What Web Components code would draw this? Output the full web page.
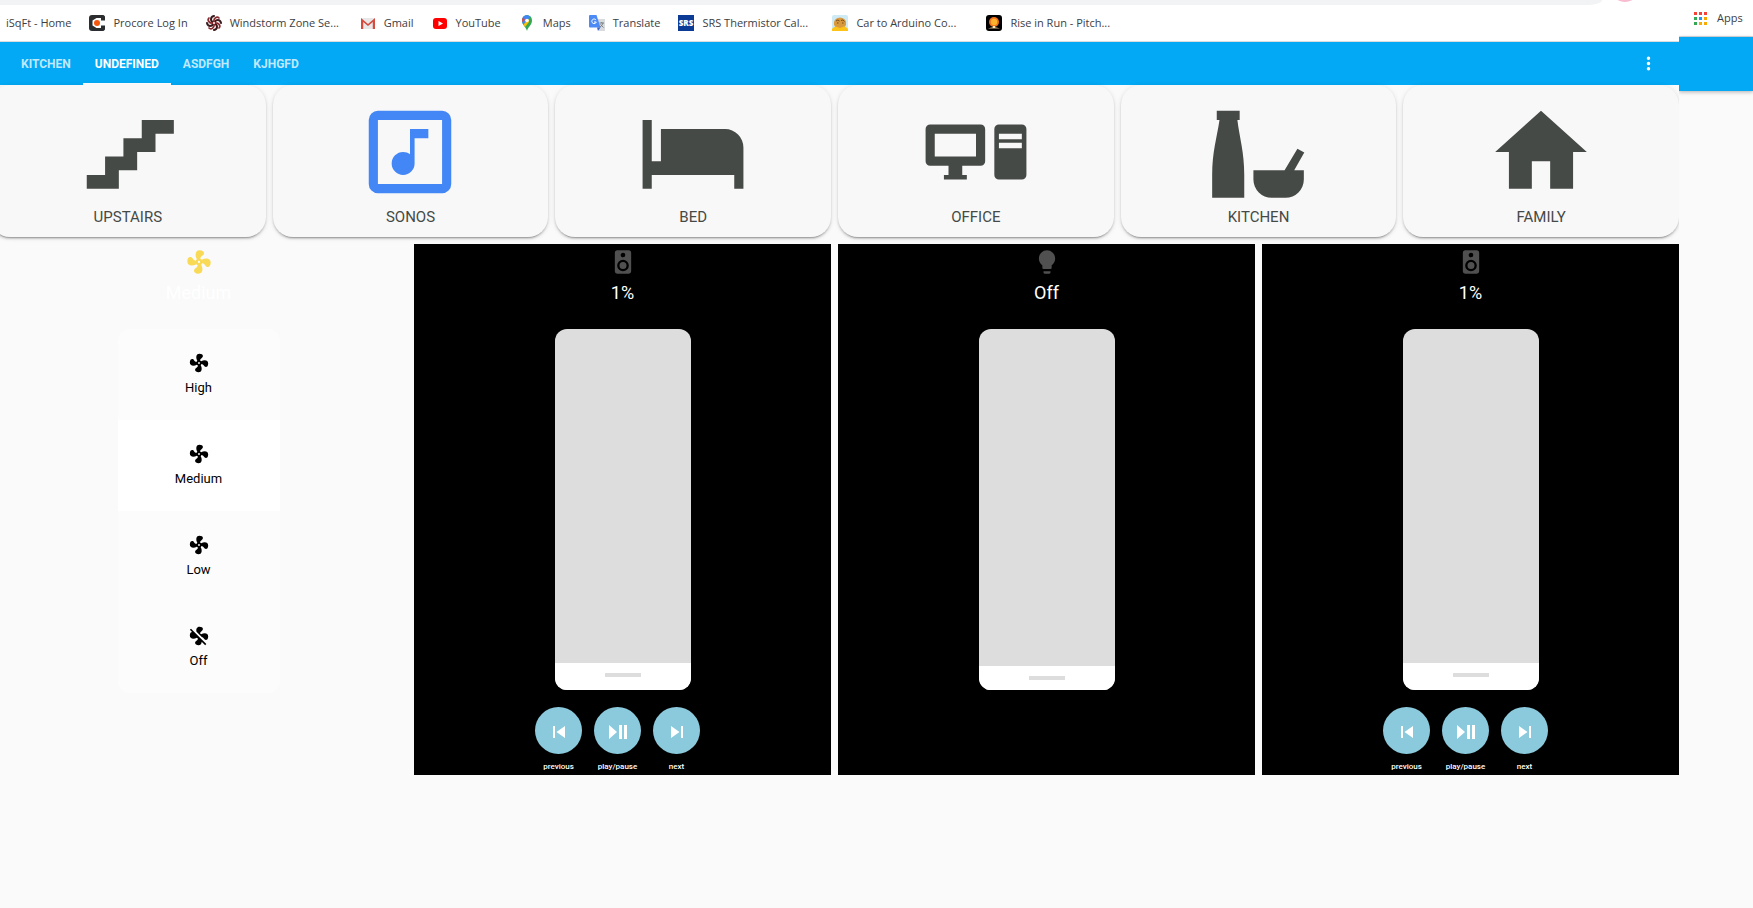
<!DOCTYPE html>
<html lang="en">
<head>
<meta charset="utf-8">
<title>Home</title>
<style>
    body {
        margin: 0;
        min-height: 100vh;
        display: flex;
        background: #fafafa;
        font-family: Roboto, "Liberation Sans", sans-serif;
    }

    main {
        flex: 1;
        min-width: 0;
        overflow: hidden;
    }

    aside {
        width: 74px;
        overflow: hidden;
    }
</style>
</head>
<body>
<main>
    <browser-strip></browser-strip>
    <bookmark-bar>
        <bookmark-link label="iSqFt - Home"></bookmark-link>
        <bookmark-link label="Procore Log In">
            <svg slot="icon" viewBox="0 0 16 16" width="16" height="16"><rect width="16" height="16" rx="3" fill="#2b2d2e"/><path d="M12 3H7.500L3.500 5.500V10.500L7.500 13H12V11H16V5H12Z" fill="#fff"/><path d="M12 0H13A3 3 0 0 1 16 3V5.500H12ZM12 10.500H16V13A3 3 0 0 1 13 16H12Z" fill="#2b2d2e"/><circle cx="8" cy="8" r="3" fill="#f6570f"/></svg>
        </bookmark-link>
        <bookmark-link label="Windstorm Zone Se..." long>
            <svg slot="icon" viewBox="0 0 16 16" width="16" height="16" fill="none" stroke-linecap="round"><g stroke="#3a1a1c" stroke-width="2"><path d="M8 8C4 6 4 2 8 1"/><path d="M8 8C10 4 14 4 15 8"/><path d="M8 8C12 10 12 14 8 15"/><path d="M8 8C6 12 2 12 1 8"/></g><g stroke="#8a2a30" stroke-width="1.700"><path d="M8 8C3 9 1 5 3 3"/><path d="M8 8C7 3 11 1 13 3"/><path d="M8 8C13 7 15 11 13 13"/><path d="M8 8C9 13 5 15 3 13"/></g><circle cx="8" cy="8" r="1" fill="#fff"/></svg>
        </bookmark-link>
        <bookmark-link label="Gmail">
            <svg slot="icon" viewBox="0 0 16 16" width="16" height="16"><path d="M1 3H15V14H1Z" fill="#e8e8e8"/><path d="M1 14V3L8 9L15 3V14H12.800V7L8 11L3.200 7V14Z" fill="#d54b3d"/></svg>
        </bookmark-link>
        <bookmark-link label="YouTube">
            <svg slot="icon" viewBox="0 0 16 16" width="16" height="16"><rect x="1" y="3" width="14" height="11" rx="3" fill="#f00"/><path d="M6.500 6V11L11 8.500Z" fill="#fff"/></svg>
        </bookmark-link>
        <bookmark-link label="Maps">
            <svg slot="icon" viewBox="0 0 16 16" width="16" height="16"><path d="M8 16C7 12 3 10 3 5.500A5 5.500 0 0 1 13 5.500C13 10 9 12 8 16Z" fill="#34a853"/><path d="M3 5.500A5 5.500 0 0 1 8 0L11.500 1.600L4.500 10Q3 8 3 5.500Z" fill="#4285f4"/><path d="M4.200 2Q2.600 4 3.200 7L6 5Z" fill="#ea4335"/><path d="M4.500 9.500L9.500 4L10 7L6 12Z" fill="#fbbc04"/><circle cx="8" cy="5.500" r="1.800" fill="#fff"/></svg>
        </bookmark-link>
        <bookmark-link label="Translate">
            <svg slot="icon" viewBox="0 0 16 16" width="16" height="16"><path d="M7 4H16V16H10Z" fill="#d8dadd"/><path d="M1 0H7.500L11.500 12.500H1A1 1 0 0 1 0 11.500V1A1 1 0 0 1 1 0Z" fill="#4c8bf5"/><path d="M8 12.500H11.500L9 16Z" fill="#3b63c9"/><path d="M7 5A2.300 2.300 0 1 0 7.300 7H5" fill="none" stroke="#fff"/><path d="M10.500 8H15M12.700 7V8M14 8Q13 11 11 12M11.500 9.500L14.500 12.500" fill="none" stroke="#7b8087"/></svg>
        </bookmark-link>
        <bookmark-link label="SRS Thermistor Cal..." long>
            <svg slot="icon" viewBox="0 0 16 16" width="16" height="16"><rect width="16" height="16" fill="#0b3b94"/><text x="8" y="11" font-family="Open Sans, sans-serif" font-size="8" font-weight="800" fill="#fff" text-anchor="middle">SRS</text></svg>
        </bookmark-link>
        <bookmark-link label="Car to Arduino Co..." long>
            <svg slot="icon" viewBox="0 0 16 16" width="16" height="16"><rect width="16" height="16" rx="2" fill="#cdeaf5"/><path d="M2 10Q1 3 8 2.500Q15 3 14 10L12 13H4Z" fill="#d99a3e"/><path d="M4 6Q6 4 7.500 6M9 5.500Q11 4 12.500 6.500M5 8H6.500M10 8H11.500" fill="none" stroke="#7a4a1c"/><path d="M0 14Q2 11 5 12L8 13L12 11.500Q15 12 16 14V16H0Z" fill="#fcc419"/></svg>
        </bookmark-link>
        <bookmark-link label="Rise in Run - Pitch..." long>
            <svg slot="icon" viewBox="0 0 16 16" width="16" height="16"><rect width="16" height="16" rx="3" fill="#000"/><circle cx="8" cy="7" r="5" fill="#f4701b"/><circle cx="8" cy="7" r="3.200" fill="#ffb22e"/><path d="M2 14L6 11.500H10L14 14Z" fill="#6b5a48"/><path d="M7 11H9L9.500 13H6.500Z" fill="#ffe9b0"/></svg>
        </bookmark-link>
    </bookmark-bar>
    <tab-bar></tab-bar>
    <card-grid columns="6">
        <room-card icon="stairs">UPSTAIRS</room-card>
        <room-card icon="music" active>SONOS</room-card>
        <room-card icon="bed">BED</room-card>
        <room-card icon="desktop">OFFICE</room-card>
        <room-card icon="bottle">KITCHEN</room-card>
        <room-card icon="home">FAMILY</room-card>
    </card-grid>
    <card-grid columns="4">
        <fan-panel></fan-panel>
        <level-panel icon="speaker" state="1%" value="1" media></level-panel>
        <level-panel icon="bulb" state="Off" value="0"></level-panel>
        <level-panel icon="speaker" state="1%" value="1" media></level-panel>
    </card-grid>
</main>
<aside>
    <app-edge></app-edge>
</aside>

<script>
const ICONS = {
    stairs: 'M15,5V9H11V13H7V17H3V20H10V16H14V12H18V8H22V5H15Z',
    music: 'M16,9H13V14.5A2.5,2.5 0 0,1 10.5,17A2.5,2.5 0 0,1 8,14.5A2.5,2.5 0 0,1 10.5,12C11.07,12 11.58,12.19 12,12.5V7H16V9M19,3A2,2 0 0,1 21,5V19A2,2 0 0,1 19,21H5A2,2 0 0,1 3,19V5A2,2 0 0,1 5,3H19M5,5V19H19V5H5Z',
    bed: 'M19,7H5V14H3V5H1V20H3V17H21V20H23V11A4,4 0 0,0 19,7',
    desktop: 'M2,6H13A1,1 0 0,1 14,7V14A1,1 0 0,1 13,15H9V17H10V18H5V17H6V15H2A1,1 0 0,1 1,14V7A1,1 0 0,1 2,6M3,8V13H12V8H3M17,6H22A1,1 0 0,1 23,7V17A1,1 0 0,1 22,18H17A1,1 0 0,1 16,17V7A1,1 0 0,1 17,6M17,8V9.2H22V8H17M17,10V11.2H22V10H17Z',
    bottle: 'M3,3H8V5H7.5C8,9 9,12 9,17V22H2V17C2,12 3,9 3.6,5H3V3M11,16H17.8L20.6,11.3L22.1,12.1L19.9,16H22V18A4,4 0 0,1 18,22H15A4,4 0 0,1 11,18V16Z',
    home: 'M10,20V14H14V20H19V12H22L12,3L2,12H5V20H10Z',
    fan: 'M12,11A1,1 0 0,0 11,12A1,1 0 0,0 12,13A1,1 0 0,0 13,12A1,1 0 0,0 12,11M12.5,2C17,2 17.11,5.57 14.75,6.75C13.76,7.24 13.32,8.29 13.13,9.22C13.61,9.42 14.03,9.73 14.35,10.13C18.05,8.13 22.03,8.92 22.03,12.5C22.03,17 18.46,17.1 17.28,14.73C16.78,13.74 15.72,13.3 14.79,13.11C14.59,13.59 14.28,14 13.88,14.34C15.87,18.03 15.08,22 11.5,22C7,22 6.91,18.42 9.27,17.24C10.25,16.75 10.69,15.71 10.89,14.79C10.4,14.59 9.97,14.27 9.65,13.87C5.96,15.85 2,15.07 2,11.5C2,7 5.56,6.89 6.74,9.26C7.24,10.25 8.29,10.68 9.22,10.87C9.41,10.39 9.73,9.97 10.14,9.65C8.15,5.96 8.94,2 12.5,2Z',
    fanOff: 'M12.5,2C9.64,2 8.57,4.55 9.29,7.47L15,13.16C15.87,13.37 16.81,13.81 17.28,14.73C18.46,17.1 22.03,17 22.03,12.5C22.03,8.92 18.05,8.13 14.35,10.13C14.03,9.73 13.61,9.42 13.13,9.22C13.32,8.29 13.76,7.24 14.75,6.75C17.11,5.57 17,2 12.5,2M3.28,4L2,5.27L4.47,7.73C3.22,7.74 2,8.87 2,11.5C2,15.07 5.96,15.85 9.65,13.87C9.97,14.27 10.4,14.59 10.89,14.79C10.69,15.71 10.25,16.75 9.27,17.24C6.91,18.42 7,22 11.5,22C13.8,22 14.94,20.36 14.94,18.21L18.73,22L20,20.72L3.28,4Z',
    speaker: 'M12,12A3,3 0 0,0 9,15A3,3 0 0,0 12,18A3,3 0 0,0 15,15A3,3 0 0,0 12,12M12,20A5,5 0 0,1 7,15A5,5 0 0,1 12,10A5,5 0 0,1 17,15A5,5 0 0,1 12,20M12,4A2,2 0 0,1 14,6A2,2 0 0,1 12,8C10.89,8 10,7.1 10,6C10,4.89 10.89,4 12,4M17,2H7C5.89,2 5,2.89 5,4V20A2,2 0 0,0 7,22H17A2,2 0 0,0 19,20V4C19,2.89 18.1,2 17,2Z',
    bulb: 'M12,2A7,7 0 0,0 5,9C5,11.38 6.19,13.47 8,14.74V17A1,1 0 0,0 9,18H15A1,1 0 0,0 16,17V14.74C17.81,13.47 19,11.38 19,9A7,7 0 0,0 12,2M9,21A1,1 0 0,0 10,22H14A1,1 0 0,0 15,21V20H9V21Z',
    previous: 'M6,18V6H8V18H6M9.5,12L18,6V18L9.5,12Z',
    playPause: 'M3,5V19L11,12M13,19H16V5H13M18,5V19H21V5',
    next: 'M16,18H18V6H16M6,18L14.5,12L6,6V18Z',
    dots: 'M12,16A2,2 0 0,1 14,18A2,2 0 0,1 12,20A2,2 0 0,1 10,18A2,2 0 0,1 12,16M12,10A2,2 0 0,1 14,12A2,2 0 0,1 12,14A2,2 0 0,1 10,12A2,2 0 0,1 12,10M12,4A2,2 0 0,1 14,6A2,2 0 0,1 12,8A2,2 0 0,1 10,6A2,2 0 0,1 12,4Z'
};

class MdIcon extends HTMLElement {
    constructor() {
        super();
        this.attachShadow({ mode: 'open' });
    }

    connectedCallback() {
        this.shadowRoot.innerHTML = `
        <style>
            :host {
                display: block;
                width: var(--icon-size, 24px);
                height: var(--icon-size, 24px);
            }

            svg {
                display: block;
                width: 100%;
                height: 100%;
                fill: currentColor;
                fill-rule: evenodd;
            }
        </style>
        <svg viewBox="0 0 24 24" aria-hidden="true"><path d="${ICONS[this.getAttribute('name')]}"/></svg>
        `;
    }
}

// bottom edge of the address field and of the profile picture
class BrowserStrip extends HTMLElement {
    constructor() {
        super();
        this.attachShadow({ mode: 'open' }).innerHTML = `
        <style>
            :host {
                display: flex;
                gap: 16px;
                height: 5px;
                padding-right: 47px;
                background: #fff;
            }

            .field {
                flex: 1;
                background: #f1f3f4;
                border-bottom-right-radius: 14px 5px;
            }

            svg {
                display: block;
            }
        </style>
        <div class="field"></div>
        <svg width="14" height="5"><ellipse cx="7" cy="-3" rx="9" ry="5" fill="#f8bbd0"/></svg>
        `;
    }
}

class BookmarkBar extends HTMLElement {
    constructor() {
        super();
        this.attachShadow({ mode: 'open' }).innerHTML = `
        <style>
            :host {
                display: flex;
                align-items: center;
                gap: 18px;
                height: 36px;
                padding-left: 6px;
                background: #fff;
                border-bottom: 1px solid #dadce0;
            }
        </style>
        <slot></slot>
        `;
    }
}

class BookmarkLink extends HTMLElement {
    constructor() {
        super();
        this.attachShadow({ mode: 'open' });
    }

    connectedCallback() {
        this.shadowRoot.innerHTML = `
        <style>
            :host {
                display: block;
                flex: none;
            }

            a {
                display: flex;
                align-items: center;
                gap: 8px;
                color: #3c4043;
                font: 11px/16px "Open Sans", "Noto Sans", sans-serif;
                text-decoration: none;
                white-space: nowrap;
            }

            :host([long]) span {
                width: 112px;
            }
        </style>
        <a href="#"><slot name="icon"></slot><span>${this.getAttribute('label')}</span></a>
        `;
    }
}

class TabBar extends HTMLElement {
    constructor() {
        super();
        this.attachShadow({ mode: 'open' }).innerHTML = `
        <style>
            :host {
                display: flex;
                justify-content: space-between;
                height: 43px;
                padding: 0 20px 0 9px;
                background: #03a9f4;
            }

            nav {
                display: flex;
            }

            button {
                margin: 0;
                border: 0;
                background: none;
                color: #fff;
                font: inherit;
                cursor: pointer;
            }

            .tab {
                padding: 2px 12px 0;
                border-bottom: 2px solid transparent;
                color: rgba(255, 255, 255, 0.75);
                font-size: 12px;
                font-weight: 700;
            }

            .tab[aria-selected="true"] {
                color: #fff;
                border-color: #fff;
            }

            .menu {
                padding: 0;
                --icon-size: 21px;
            }
        </style>
        <nav role="tablist">
            <button class="tab" role="tab" aria-selected="false">KITCHEN</button>
            <button class="tab" role="tab" aria-selected="true">UNDEFINED</button>
            <button class="tab" role="tab" aria-selected="false">ASDFGH</button>
            <button class="tab" role="tab" aria-selected="false">KJHGFD</button>
        </nav>
        <button class="menu" aria-label="Menu"><md-icon name="dots"></md-icon></button>
        `;
        this.shadowRoot.querySelector('nav').addEventListener('click', (e) => {
            if (!e.target.matches('.tab')) return;
            this.shadowRoot.querySelectorAll('.tab').forEach((tab) => {
                tab.setAttribute('aria-selected', tab === e.target);
            });
        });
    }
}

class CardGrid extends HTMLElement {
    constructor() {
        super();
        this.attachShadow({ mode: 'open' });
    }

    connectedCallback() {
        this.shadowRoot.innerHTML = `
        <style>
            :host {
                display: grid;
                grid-template-columns: repeat(${this.getAttribute('columns')}, 1fr);
                gap: 7px;
                margin: 0 0 7px -10px;
            }
        </style>
        <slot></slot>
        `;
    }
}

class RoomCard extends HTMLElement {
    constructor() {
        super();
        this.attachShadow({ mode: 'open' });
    }

    connectedCallback() {
        this.shadowRoot.innerHTML = `
        <style>
            :host {
                display: block;
            }

            button {
                display: flex;
                flex-direction: column;
                align-items: center;
                width: 100%;
                height: 152px;
                margin: 0;
                padding: 12px 0 0;
                border: 0;
                border-radius: 20px;
                background: #f8f8f8;
                box-shadow: 0 2px 2px 0 rgba(0, 0, 0, 0.14), 0 1px 5px 0 rgba(0, 0, 0, 0.12), 0 3px 1px -2px rgba(0, 0, 0, 0.2);
                color: #454a46;
                font: inherit;
                cursor: pointer;
                --icon-size: 110px;
            }

            :host([active]) md-icon {
                color: #4287f5;
            }

            span {
                font-size: 15px;
                line-height: 20px;
            }
        </style>
        <button><md-icon name="${this.getAttribute('icon')}"></md-icon><span><slot></slot></span></button>
        `;
    }
}

const PANEL_HEAD = `
    header {
        display: flex;
        flex-direction: column;
        align-items: center;
        height: 85px;
        box-sizing: border-box;
        padding-top: 4px;
        color: #fff;
        font-size: 18px;
        line-height: 24px;
        --icon-size: 28px;
    }

    header span {
        margin-top: 5px;
    }
`;

class FanPanel extends HTMLElement {
    constructor() {
        super();
        const speeds = [['High', 'fan'], ['Medium', 'fan'], ['Low', 'fan'], ['Off', 'fanOff']];
        this.attachShadow({ mode: 'open' }).innerHTML = `
        <style>
            ${PANEL_HEAD}
            :host {
                display: flex;
                flex-direction: column;
                align-items: center;
            }

            header md-icon {
                color: #f9da56;
            }

            .speeds {
                width: 162px;
                border-radius: 12px;
                background: #fcfcfc;
                overflow: hidden;
            }

            label {
                display: flex;
                flex-direction: column;
                align-items: center;
                height: 91px;
                box-sizing: border-box;
                padding-top: 23px;
                color: #000;
                font-size: 13px;
                line-height: 16px;
                cursor: pointer;
                --icon-size: 22px;
            }

            label:has(:checked) {
                background: #fff;
            }

            label span {
                margin-top: 6px;
            }

            input {
                appearance: none;
                width: 0;
                height: 0;
                margin: 0;
            }
        </style>
        <header><md-icon name="fan"></md-icon><span>Medium</span></header>
        <div class="speeds">
            ${speeds.map(([name, icon]) => `
            <label>
                <input type="radio" name="speed" value="${name}" ${name === 'Medium' ? 'checked' : ''}>
                <md-icon name="${icon}"></md-icon>
                <span>${name}</span>
            </label>`).join('')}
        </div>
        `;
    }
}

class LevelPanel extends HTMLElement {
    constructor() {
        super();
        this.attachShadow({ mode: 'open' });
    }

    get media() {
        return this.getAttribute('media') !== null;
    }

    connectedCallback() {
        const actions = [['previous', 'previous'], ['play/pause', 'playPause'], ['next', 'next']];
        this.shadowRoot.innerHTML = `
        <style>
            ${PANEL_HEAD}
            :host {
                display: flex;
                flex-direction: column;
                align-items: center;
                background: #000;
            }

            header md-icon {
                color: #505050;
            }

            input {
                appearance: none;
                writing-mode: vertical-lr;
                direction: rtl;
                width: 136px;
                height: 361px;
                margin: 0;
                border-radius: 12px;
                background: #ddd;
                overflow: hidden;
            }

            input::-webkit-slider-thumb {
                appearance: none;
                width: 136px;
                height: 24px;
                background: linear-gradient(#ddd, #ddd) center / 36px 4px no-repeat #fff;
                box-shadow: 0 20px 0 #fff;
            }

            .actions {
                display: flex;
                gap: 12px;
                margin: 17px 10px 4px 0;
            }

            .action {
                display: flex;
                flex-direction: column;
                align-items: center;
                gap: 8px;
                width: 47px;
                color: #fff;
                font-size: 8px;
                font-weight: 500;
                line-height: 9px;
            }

            button {
                display: grid;
                place-items: center;
                width: 47px;
                height: 47px;
                margin: 0;
                padding: 3px 0 0;
                border: 0;
                border-radius: 50%;
                background: #8bcadd;
                color: #fff;
                cursor: pointer;
            }
        </style>
        <header><md-icon name="${this.getAttribute('icon')}"></md-icon><span>${this.getAttribute('state')}</span></header>
        <input type="range" min="0" max="100" value="${this.getAttribute('value')}" aria-label="Level">
        ${this.media ? `<div class="actions">
            ${actions.map(([name, icon]) => `
            <div class="action">
                <button aria-labelledby="${icon}"><md-icon name="${icon}"></md-icon></button>
                <span id="${icon}">${name}</span>
            </div>`).join('')}
        </div>` : ''}
        `;
    }
}

class AppEdge extends HTMLElement {
    constructor() {
        super();
        const colors = ['#f44336', '#f44336', '#f44336', '#34a853', '#2196f3', '#f4a500', '#34a853', '#f9ab00', '#f9ab00'];
        this.attachShadow({ mode: 'open' }).innerHTML = `
        <style>
            :host {
                display: block;
                padding-bottom: 8px;
            }

            a {
                display: flex;
                align-items: center;
                gap: 10px;
                height: 36px;
                padding-left: 15px;
                background: #fff;
                border-bottom: 1px solid #dadce0;
                color: #3c4043;
                font: 11px/16px "Open Sans", "Noto Sans", sans-serif;
                text-decoration: none;
            }

            .bar {
                height: 54px;
                background: #03a9f4;
                box-shadow: 0 1px 4px rgba(0, 0, 0, 0.3);
            }
        </style>
        <a href="#">
            <svg width="13" height="13">${colors.map((c, i) => `<rect x="${i % 3 * 5}" y="${Math.floor(i / 3) * 5}" width="3" height="3" fill="${c}"/>`).join('')}</svg>
            <span>Apps</span>
        </a>
        <div class="bar"></div>
        `;
    }
}

customElements.define('md-icon', MdIcon);
customElements.define('browser-strip', BrowserStrip);
customElements.define('bookmark-bar', BookmarkBar);
customElements.define('bookmark-link', BookmarkLink);
customElements.define('tab-bar', TabBar);
customElements.define('card-grid', CardGrid);
customElements.define('room-card', RoomCard);
customElements.define('fan-panel', FanPanel);
customElements.define('level-panel', LevelPanel);
customElements.define('app-edge', AppEdge);
</script>
</body>
</html>
